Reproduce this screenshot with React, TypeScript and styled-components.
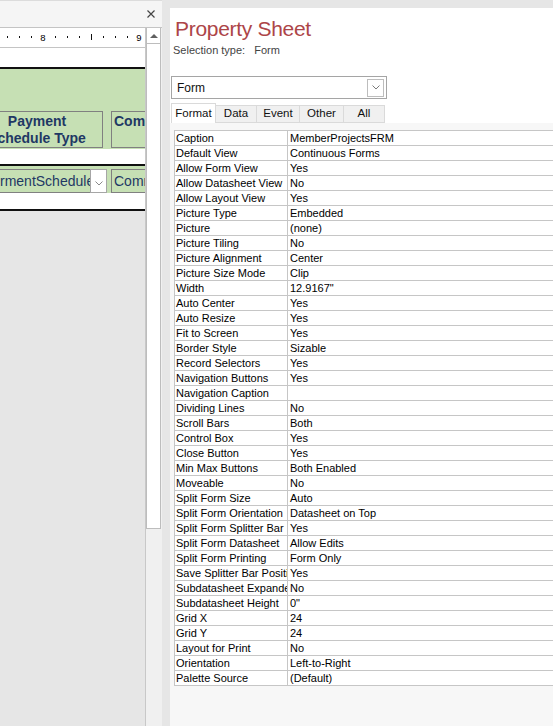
import styled, { createGlobalStyle } from "styled-components";

interface SheetProp {
  name: string;
  value: string;
}

const PROPS: SheetProp[] = [
  { name: "Caption", value: "MemberProjectsFRM" },
  { name: "Default View", value: "Continuous Forms" },
  { name: "Allow Form View", value: "Yes" },
  { name: "Allow Datasheet View", value: "No" },
  { name: "Allow Layout View", value: "Yes" },
  { name: "Picture Type", value: "Embedded" },
  { name: "Picture", value: "(none)" },
  { name: "Picture Tiling", value: "No" },
  { name: "Picture Alignment", value: "Center" },
  { name: "Picture Size Mode", value: "Clip" },
  { name: "Width", value: '12.9167"' },
  { name: "Auto Center", value: "Yes" },
  { name: "Auto Resize", value: "Yes" },
  { name: "Fit to Screen", value: "Yes" },
  { name: "Border Style", value: "Sizable" },
  { name: "Record Selectors", value: "Yes" },
  { name: "Navigation Buttons", value: "Yes" },
  { name: "Navigation Caption", value: "" },
  { name: "Dividing Lines", value: "No" },
  { name: "Scroll Bars", value: "Both" },
  { name: "Control Box", value: "Yes" },
  { name: "Close Button", value: "Yes" },
  { name: "Min Max Buttons", value: "Both Enabled" },
  { name: "Moveable", value: "No" },
  { name: "Split Form Size", value: "Auto" },
  { name: "Split Form Orientation", value: "Datasheet on Top" },
  { name: "Split Form Splitter Bar", value: "Yes" },
  { name: "Split Form Datasheet", value: "Allow Edits" },
  { name: "Split Form Printing", value: "Form Only" },
  { name: "Save Splitter Bar Position", value: "Yes" },
  { name: "Subdatasheet Expanded", value: "No" },
  { name: "Subdatasheet Height", value: '0"' },
  { name: "Grid X", value: "24" },
  { name: "Grid Y", value: "24" },
  { name: "Layout for Print", value: "No" },
  { name: "Orientation", value: "Left-to-Right" },
  { name: "Palette Source", value: "(Default)" },
];

const TABS = [
  { label: "Format", width: 45 },
  { label: "Data", width: 41 },
  { label: "Event", width: 43 },
  { label: "Other", width: 44 },
  { label: "All", width: 41 },
];

// small ruler ticks, 12px per eighth of an inch
const RULER_DOTS = [7, 19, 31, 55, 67, 79, 103, 115, 127];

const Ruler = () => (
  <RulerBar>
    <svg width="145" height="19" viewBox="0 0 145 19">
      {RULER_DOTS.map((x) => (
        <line key={x} x1={x + 0.5} y1="8" x2={x + 0.5} y2="10" stroke="#111" />
      ))}
      <line x1="91.5" y1="6" x2="91.5" y2="12" stroke="#111" />
      <text x="43" y="12.5" fontSize="9.5" textAnchor="middle" fill="#000" fontFamily="Liberation Sans, sans-serif">
        8
      </text>
      <text x="139" y="12.5" fontSize="9.5" textAnchor="middle" fill="#000" fontFamily="Liberation Sans, sans-serif">
        9
      </text>
    </svg>
  </RulerBar>
);

const Chevron = ({ color }: { color: string }) => (
  <svg width="8" height="5" viewBox="0 0 8 5">
    <polyline points="0.5,0.5 4,4 7.5,0.5" fill="none" stroke={color} strokeWidth="1" />
  </svg>
);

const App = () => {
  return (
    <>
      <GlobalStyle />
      <Screen>
        <LeftPane>
          <PaneBar>
            <svg width="8" height="8" viewBox="0 0 8 8">
              <path d="M0.5 0.5 L7.5 7.5 M7.5 0.5 L0.5 7.5" stroke="#444" strokeWidth="1.2" />
            </svg>
          </PaneBar>
          <PaneBody>
            <Canvas>
              <Ruler />
              <WhiteBand $height={19} />
              <SectionRule />
              <HeaderBand>
                <HeaderLabel $width={132} $align="center" style={{ marginLeft: -29 }}>
                  Payment
                  <br />
                  Schedule Type
                </HeaderLabel>
                <HeaderLabel $width={70} $align="left">
                  Comments
                </HeaderLabel>
              </HeaderBand>
              <WhiteBand $height={15} />
              <SectionRule />
              <DetailBand>
                <ComboField>
                  <FieldText $width={93} $open>
                    rmentSchedule
                  </FieldText>
                  <FieldDrop>
                    <Chevron color="#8a8a8a" />
                  </FieldDrop>
                </ComboField>
                <FieldText $width={70}>Comments</FieldText>
              </DetailBand>
              <WhiteBand $height={16} />
              <SectionRule />
            </Canvas>
            <ScrollBar>
              <ScrollArrow />
              <ScrollThumb />
            </ScrollBar>
          </PaneBody>
        </LeftPane>

        <PropertyPane>
          <Title>Property Sheet</Title>
          <Selection>
            Selection type:<SelectionValue>Form</SelectionValue>
          </Selection>
          <Combo>
            <ComboText>Form</ComboText>
            <ComboButton>
              <Chevron color="#7a7a7a" />
            </ComboButton>
          </Combo>
          <Tabs>
            {TABS.map((tab, i) => (
              <Tab key={tab.label} $width={tab.width} $active={i === 0}>
                {tab.label}
              </Tab>
            ))}
          </Tabs>
          <GridArea>
            <Grid>
              {PROPS.map((p) => (
                <Row key={p.name}>
                  <NameCell>{p.name}</NameCell>
                  <ValueCell>{p.value}</ValueCell>
                </Row>
              ))}
            </Grid>
          </GridArea>
        </PropertyPane>
      </Screen>
    </>
  );
};

export default App;

const GlobalStyle = createGlobalStyle`
  html, body {
    margin: 0;
    padding: 0;
  }
  body {
    width: 553px;
    height: 726px;
    overflow: hidden;
    background: #e6e6e6;
    font-family: "Liberation Sans", Arial, sans-serif;
  }
`;

const Screen = styled.div`
  display: flex;
  width: 553px;
  height: 726px;
  background: #e6e6e6;
  overflow: hidden;
`;

const LeftPane = styled.div`
  width: 162px;
  flex-shrink: 0;
  display: flex;
  flex-direction: column;
`;

const PaneBar = styled.div`
  height: 28px;
  box-sizing: border-box;
  background: #f5f5f5;
  border-top: 1px solid #dcdcdc;
  border-bottom: 1px solid #c4c4c4;
  display: flex;
  align-items: center;
  justify-content: flex-end;
  padding-right: 7px;
`;

const PaneBody = styled.div`
  flex: 1;
  display: flex;
  min-height: 0;
`;

const Canvas = styled.div`
  width: 145px;
  flex-shrink: 0;
  display: flex;
  flex-direction: column;
  overflow: hidden;
  background: #e6e6e6;
`;

const RulerBar = styled.div`
  height: 20px;
  box-sizing: border-box;
  background: #fff;
  border-bottom: 1px solid #c4c4c4;
  svg {
    display: block;
  }
`;

const WhiteBand = styled.div<{ $height: number }>`
  height: ${(p) => p.$height}px;
  background: #fff;
  flex-shrink: 0;
`;

const SectionRule = styled.div`
  height: 2px;
  background: #111;
  flex-shrink: 0;
`;

const HeaderBand = styled.div`
  height: 80px;
  flex-shrink: 0;
  background: #c6e0b4;
  display: flex;
  align-items: flex-end;
  gap: 8px;
  padding-bottom: 1px;
  box-sizing: border-box;
  overflow: hidden;
`;

const HeaderLabel = styled.div<{ $width: number; $align: string }>`
  width: ${(p) => p.$width}px;
  height: 37px;
  flex-shrink: 0;
  box-sizing: border-box;
  border: 1px solid #808080;
  padding: 1px 2px 0 2px;
  font-weight: bold;
  font-size: 14px;
  line-height: 17px;
  color: #1f3864;
  text-align: ${(p) => p.$align};
  white-space: nowrap;
  overflow: hidden;
`;

const DetailBand = styled.div`
  height: 27px;
  flex-shrink: 0;
  background: #c6e0b4;
  display: flex;
  align-items: flex-end;
  gap: 4px;
  overflow: hidden;
`;

const ComboField = styled.div`
  display: flex;
  margin-left: -3px;
  flex-shrink: 0;
`;

const FieldText = styled.div<{ $width: number; $open?: boolean }>`
  width: ${(p) => p.$width}px;
  height: 24px;
  flex-shrink: 0;
  box-sizing: border-box;
  border: 1px solid #808080;
  border-right: ${(p) => (p.$open ? "none" : "1px solid #808080")};
  padding-left: 2px;
  font-size: 14px;
  line-height: 22px;
  color: #1f3864;
  white-space: nowrap;
  overflow: hidden;
`;

const FieldDrop = styled.div`
  width: 17px;
  height: 24px;
  box-sizing: border-box;
  border: 1px solid #a6a6a6;
  background: #fff;
  display: flex;
  align-items: flex-end;
  justify-content: center;
  padding-bottom: 6px;
`;

const ScrollBar = styled.div`
  width: 17px;
  flex-shrink: 0;
  box-sizing: border-box;
  border-left: 1px solid #c8c8c8;
  background: #f0f0f0;
  display: flex;
  flex-direction: column;
`;

const ScrollArrow = styled.div`
  width: 15px;
  height: 15px;
  box-sizing: border-box;
  background: #fff;
  border-left: 1px solid #bdbdbd;
  border-right: 1px solid #bdbdbd;
  display: flex;
  align-items: center;
  justify-content: center;
  &::before {
    content: "";
    border-left: 4px solid transparent;
    border-right: 4px solid transparent;
    border-bottom: 4px solid #606060;
  }
`;

const ScrollThumb = styled.div`
  width: 15px;
  height: 486px;
  box-sizing: border-box;
  background: #fff;
  border: 1px solid #bdbdbd;
`;

const PropertyPane = styled.div`
  flex: 1;
  min-width: 0;
  margin: 8px 0 0 8px;
  background: #fff;
  display: flex;
  flex-direction: column;
  overflow: hidden;
`;

const Title = styled.div`
  margin: 9px 0 0 5px;
  font-size: 21px;
  line-height: 24px;
  letter-spacing: -0.3px;
  color: #ad4548;
  white-space: nowrap;
`;

const Selection = styled.div`
  margin: 2px 0 0 3px;
  font-size: 11px;
  line-height: 14px;
  color: #444;
`;

const SelectionValue = styled.span`
  margin-left: 9px;
`;

const Combo = styled.div`
  margin: 19px 0 0 1px;
  width: 216px;
  height: 23px;
  box-sizing: border-box;
  border: 1px solid #a5a5a5;
  display: flex;
  align-items: center;
  justify-content: space-between;
  padding: 0 2px 0 5px;
`;

const ComboText = styled.span`
  font-size: 12px;
  color: #111;
`;

const ComboButton = styled.div`
  width: 17px;
  height: 18px;
  box-sizing: border-box;
  border: 1px solid #bdbdbd;
  display: flex;
  align-items: center;
  justify-content: center;
`;

const Tabs = styled.div`
  margin-top: 4px;
  padding-left: 1px;
  display: flex;
  align-items: flex-end;
`;

const Tab = styled.div<{ $width: number; $active?: boolean }>`
  width: ${(p) => p.$width}px;
  height: ${(p) => (p.$active ? 20 : 18)}px;
  box-sizing: border-box;
  background: ${(p) => (p.$active ? "#fff" : "#f0f0f0")};
  border: 1px solid #dadada;
  border-bottom: ${(p) => (p.$active ? "none" : "1px solid #dadada")};
  border-left: ${(p) => (p.$active ? "1px solid #dadada" : "none")};
  font-size: 11.5px;
  line-height: ${(p) => (p.$active ? 18 : 15)}px;
  text-align: center;
  color: #111;
`;

const GridArea = styled.div`
  flex: 1;
  background: #f7f7f7;
  padding: 7px 0 0 4px;
`;

const Grid = styled.div`
  width: 400px;
  background: #fff;
  border-top: 1px solid #c6c6c6;
  border-left: 1px solid #c6c6c6;
`;

const Row = styled.div`
  display: grid;
  grid-template-columns: 113px 1fr;
  height: 15px;
  box-sizing: border-box;
  border-bottom: 1px solid #c6c6c6;
  font-size: 11px;
  line-height: 15px;
  color: #000;
`;

const NameCell = styled.div`
  border-right: 1px solid #c6c6c6;
  padding-left: 1px;
  white-space: nowrap;
  overflow: hidden;
`;

const ValueCell = styled.div`
  padding-left: 2px;
  white-space: nowrap;
  overflow: hidden;
`;
